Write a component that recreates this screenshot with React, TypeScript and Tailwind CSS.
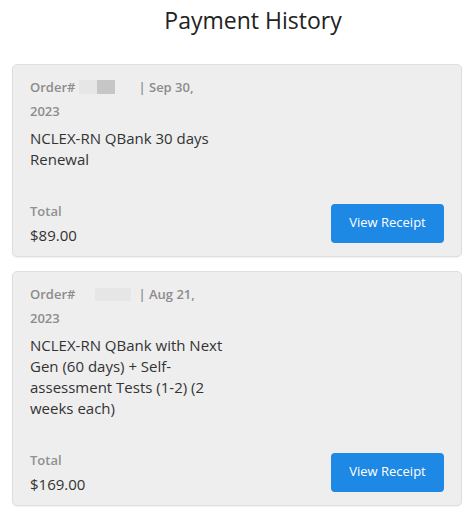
const orders = [
  {
    id: 1,
    date: "Sep 30, 2023",
    title: "NCLEX-RN QBank 30 days Renewal",
    total: "$89.00",
  },
  {
    id: 2,
    date: "Aug 21, 2023",
    title: "NCLEX-RN QBank with Next Gen (60 days) + Self-assessment Tests (1-2) (2 weeks each)",
    total: "$169.00",
  },
];

const OrderCard = ({ order }: { order: (typeof orders)[number] }) => {
  return (
    <div className="bg-[#eeeeee] border border-[#dedede] rounded-[5px] shadow-[0_1px_2px_rgba(0,0,0,0.06)] px-[17px] pt-[10px] pb-[9px]">
      <div className="w-[196px]">
        <p className="text-[13px] leading-[24px] font-semibold text-[#8c8c8c]">
          Order#
          {order.id === 1 ? (
            <>
              <span className="inline-block align-[-2px] ml-[4px] w-[18px] h-[14px] bg-[#e6e6e6]"></span>
              <span className="inline-block align-[-2px] w-[18px] h-[14px] bg-[#c6c6c6]"></span>
              <span className="ml-[23px]">|</span>
            </>
          ) : (
            <>
              <span className="inline-block align-[-2px] ml-[20px] w-[36px] h-[13px] bg-[#e6e6e6]"></span>
              <span className="ml-[7px]">|</span>
            </>
          )}{" "}
          {order.date}
        </p>
        <p className="mt-[5px] text-[15px] leading-[21px] text-[#333333]">{order.title}</p>
      </div>
      <div className="mt-[29px] flex items-center justify-between">
        <div>
          <p className="text-[13px] leading-[24px] font-semibold text-[#909090]">Total</p>
          <p className="text-[15px] leading-[24px] text-[#333333]">{order.total}</p>
        </div>
        <button className="h-[39px] w-[113px] rounded-[4px] bg-[#1e88e5] text-white text-[13px]">
          View Receipt
        </button>
      </div>
    </div>
  );
};

export default function App() {
  return (
    <div className="min-h-screen bg-white font-['Open_Sans',sans-serif] px-[12px] pb-[10px]">
      <h1 className="pt-[4px] pl-[32px] text-center text-[23px] leading-[32px] text-[#222222]">
        Payment History
      </h1>
      <div className="mt-[28px] flex flex-col gap-[14px]">
        {orders.map((order) => (
          <OrderCard key={order.id} order={order} />
        ))}
      </div>
    </div>
  );
}
